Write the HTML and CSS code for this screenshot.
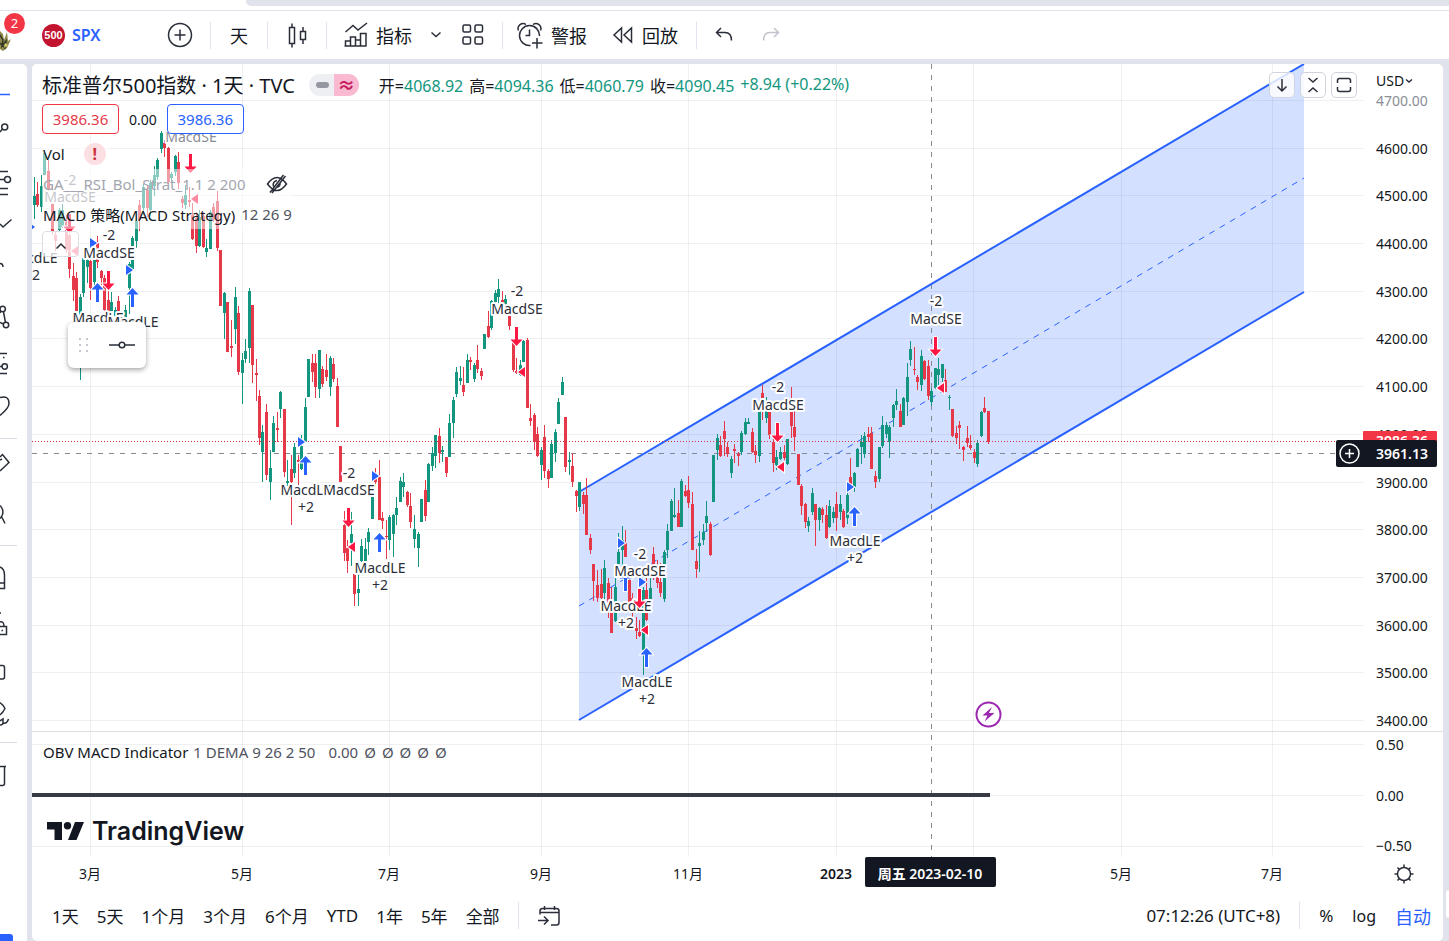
FILE: index.html
```html
<!DOCTYPE html>
<html lang="zh-CN">
  <head>
    <meta charset="UTF-8" />
    <meta name="viewport" content="width=device-width, initial-scale=1.0" />
    <title>SPX 3986.36</title>
    <link rel="stylesheet" href="styles.css" />
  </head>
  <body>
    <div class="tabs"><div class="tabs-rest"></div></div>

    <header class="topbar">
      <div class="profile">
        <svg width="12" height="26" viewBox="0 0 12 26">
          <path d="M0 5 3 8 4 14 7 6 8 15 11 13 7 22 3 25 0 23z" fill="#8f8a4a" />
          <path d="M0 9 3 14 2 20 6 15 5 22 0 17" fill="none" stroke="#2f3328" stroke-width="1.4" />
          <path d="M5 17 8 19 4 22z" fill="#d8cf6a" />
        </svg>
        <span class="badge">2</span>
      </div>
      <button class="symbol"><span class="symbol-logo">500</span>SPX</button>
      <button class="tool w40" aria-label="添加">
        <svg width="26" height="26" viewBox="0 0 26 26"><circle cx="13" cy="13" r="11.5" /><path d="M13 7.500v11M7.500 13h11" /></svg>
      </button>
      <i class="line"></i>
      <button class="tool w36">天</button>
      <i class="line"></i>
      <button class="tool w38" aria-label="K线图">
        <svg width="22" height="28" viewBox="0 0 22 28"><path d="M3.500 6.500h5v16h-5zM6 2.500v4M6 22.500v4M14.500 10.500h5v8h-5zM17 6v4.500M17 18.500V23" /></svg>
      </button>
      <i class="line"></i>
      <button class="tool indicators">
        <svg width="24" height="26" viewBox="0 0 24 26"><path d="M1.500 10 9 3.500l5 4.500 9-7M1.500 24v-5h5v5M6.500 24v-9h5v9M11.500 24v-6h5v6M16.500 24V11.500h5.500V24M.500 24h22" /></svg>
        指标
      </button>
      <button class="tool w28" aria-label="收藏的指标">
        <svg width="12" height="8" viewBox="0 0 12 8"><path d="M1.500 1.500 6 5.500l4.500-4" /></svg>
      </button>
      <button class="tool w38 layouts" aria-label="布局">
        <svg width="22" height="22" viewBox="0 0 22 22"><rect x="1" y="1" width="7.500" height="7" rx="1.500" /><rect x="13" y="1" width="7.500" height="7" rx="1.500" /><rect x="1" y="13" width="7.500" height="7" rx="1.500" /><rect x="13" y="13" width="7.500" height="7" rx="1.500" /></svg>
      </button>
      <i class="line"></i>
      <button class="tool alert">
        <svg width="26" height="28" viewBox="0 0 26 28"><path d="M13.500 24.500A10 10 0 1 1 22.500 15M12.500 8.500v6H8.500M1.500 9.500A5 5 0 0 1 9 3.500M16 3.500a5 5 0 0 1 7.500 6M20 17v10.500M15 22h10.500" /></svg>
        警报
      </button>
      <button class="tool replay">
        <svg width="22" height="20" viewBox="0 0 22 20"><path d="M9.500 3v14L2 10zM19.500 3v14L12 10z" /></svg>
        回放
      </button>
      <i class="line"></i>
      <button class="tool w34" aria-label="撤销">
        <svg width="18" height="16" viewBox="0 0 18 16"><path d="M6 1 1.500 5.500 6 10M1.500 5.500H10q6.500 0 6.500 8" /></svg>
      </button>
      <button class="tool w34 redo" aria-label="重做" disabled>
        <svg width="18" height="16" viewBox="0 0 18 16"><path d="M12 1l4.500 4.500L12 10M16.500 5.500H8q-6.500 0-6.500 8" /></svg>
      </button>
    </header>

    <main class="workspace">
      <nav class="drawbar">
        <button aria-label="光标"><svg viewBox="0 0 27 45"><path class="active" d="M0 26.500h10" /></svg></button>
        <button aria-label="趋势线"><svg viewBox="0 0 27 45"><circle cx="4.700" cy="14" r="3" /><path d="M2.500 16 0 19" /></svg></button>
        <button aria-label="斐波那契"><svg viewBox="0 0 27 45"><path d="M0 13.500h8M0 21.500h4.500M0 30.500h8M0 36.500h8" /><circle cx="7.500" cy="21.500" r="3" /></svg></button>
        <button aria-label="形状"><svg viewBox="0 0 27 45"><path d="M0 21l3 3 8.500-7.500" /></svg></button>
        <button aria-label="文字"><svg viewBox="0 0 27 45"><path d="M0 15.500q3 0 3 3.500" /></svg></button>
        <button aria-label="形态"><svg viewBox="0 0 27 45"><circle cx="2.700" cy="16" r="2.700" /><circle cx="6" cy="32" r="2.700" /><path d="M3.500 19l2 10.500M1 18 0 20M3.500 31 0 29.500" /></svg></button>
        <button aria-label="预测"><svg viewBox="0 0 27 45"><path d="M0 15.500h7M3 19.500h1.500M0 28.500h2M0 35.500h7" /><circle cx="4.700" cy="28.500" r="2.700" /></svg></button>
        <button aria-label="图标"><svg viewBox="0 0 27 45"><path d="M0 14.500q9-2.500 9 6Q9 25 0 32.500" /></svg></button>
        <i></i>
        <button aria-label="测量"><svg viewBox="0 0 27 45"><path d="M0 12l2.500-2.500L9 17.500 0 26M0 15l2-1" /></svg></button>
        <button aria-label="放大"><svg viewBox="0 0 27 45"><path d="M0 15.500q4 4 2.500 9-1 2.500-2.500 4M1.500 26.500 5 33.500" /></svg></button>
        <i></i>
        <button aria-label="磁铁"><svg viewBox="0 0 27 45"><path d="M0 15q4.500 2 4.500 8v13.500H0M0 31h4.500" /></svg></button>
        <button aria-label="保持绘图"><svg viewBox="0 0 27 45"><path d="M0 16h1M0 25q4-1 4 4.500M0 29.500h6.500v8H0M1.500 33.500h1.500" /></svg></button>
        <button aria-label="锁定"><svg viewBox="0 0 27 45"><path d="M0 23.500h2.500q2 0 2 2v9.500q0 2-2 2H0" /></svg></button>
        <button aria-label="隐藏"><svg viewBox="0 0 27 45"><path d="M0 15.500q3 2 5 6-2 4-5 6.500M0 34l3-2v4q4 1 5.500-4M0 38q3 0 3-2" /></svg></button>
        <i></i>
        <button aria-label="删除"><svg viewBox="0 0 27 45"><path d="M0 17.500h6M4.500 17.500v17q0 2-2 2H0" /></svg></button>
        <span class="drawbar-end"></span>
      </nav>

      <section class="chart">
        <div class="plot-row">
          <div class="plot">
            <svg id="plot" class="plot-svg"></svg>

            <div class="legend">
              <div class="legend-head">
                <h1>标准普尔500指数 · 1天 · TVC</h1>
                <span class="status">
                  <svg width="25" height="22" viewBox="0 0 25 22"><rect x="7" y="8" width="13" height="6" rx="3" /></svg>
                  <b>≈</b>
                </span>
                <div class="ohlc">
                  <span>开=<em>4068.92</em></span>
                  <span>高=<em>4094.36</em></span>
                  <span>低=<em>4060.79</em></span>
                  <span>收=<em>4090.45</em></span>
                  <em>+8.94 (+0.22%)</em>
                </div>
              </div>
              <div class="quotes">
                <button class="sell">3986.36</button>
                <span>0.00</span>
                <button class="buy">3986.36</button>
              </div>
              <div class="study">Vol <span class="warn">!</span></div>
              <div class="study hidden">
                GA___RSI_Bol_Strat_1.1 2 200
                <svg width="22" height="20" viewBox="0 0 22 20"><path d="M1.500 10Q11-3 20.500 10 11 23 1.500 10zM7.500 12.500Q6 8 11 6.500M14 8q1 5-4 5.500M17.500 1 4 18.500M19.500 2 6 19" /></svg>
              </div>
              <div class="study">MACD 策略(MACD Strategy) <span>12 26 9</span></div>
              <button class="collapse" aria-label="收起">
                <svg width="12" height="8" viewBox="0 0 12 8"><path d="M1.500 6.500 6 2l4.500 4.500" /></svg>
              </button>
            </div>

            <div class="drawing-menu">
              <svg width="12" height="18" viewBox="0 0 12 18"><path class="grip" d="M2 3h0M9 3h0M2 9h0M9 9h0M2 15h0M9 15h0" /></svg>
              <button aria-label="线条样式"><svg width="28" height="10" viewBox="0 0 28 10"><path d="M1 5h10M17 5h10" /><circle cx="14" cy="5" r="2.800" /></svg></button>
            </div>

            <div class="pane-buttons">
              <button aria-label="移动窗格"><svg width="16" height="16" viewBox="0 0 16 16"><path d="M8 2v12M3.500 9.500 8 14l4.500-4.500" /></svg></button>
              <button aria-label="折叠窗格"><svg width="16" height="16" viewBox="0 0 16 16"><path d="M3.500 1 8 5l4.500-4M3.500 15 8 11l4.500 4" /></svg></button>
              <button aria-label="最大化窗格"><svg width="16" height="16" viewBox="0 0 16 16"><path d="M1.500 6V3.500q0-2 2-2h9q2 0 2 2V6M1.500 10v2.500q0 2 2 2h9q2 0 2-2V10" /></svg></button>
            </div>

            <div class="obv">OBV MACD Indicator <span>1 DEMA 9 26 2 50</span><span class="nums">0.00 <b>Ø</b><b>Ø</b><b>Ø</b><b>Ø</b><b>Ø</b></span></div>

            <a class="brand" href="#">
              <svg width="38" height="20" viewBox="0 0 38 20"><path d="M0 1h15v18H7.500V8.500H0zM28 1h9l-7.500 18H21z" /><circle cx="20.500" cy="4.700" r="3.700" /></svg>
              TradingView
            </a>
          </div>
          <div class="price-axis">
            <svg id="prices" class="price-svg"></svg>
            <label class="currency">
              <select aria-label="货币"><option>USD</option></select>
              <svg width="8" height="6" viewBox="0 0 8 6"><path d="M1 1.500 4 4l3-2.500" /></svg>
            </label>
          </div>
        </div>

        <div class="time-row">
          <svg id="times" class="time-svg"></svg>
          <button class="settings" aria-label="设置">
            <svg width="22" height="22" viewBox="0 0 22 22"><circle cx="11" cy="11" r="6.500" /><path d="M11 1.500v3M11 17.500v3M1.500 11h3M17.500 11h3M4.500 4.500l2 2M15.500 15.500l2 2M17.500 4.500l-2 2M6.500 15.500l-2 2" /></svg>
          </button>
        </div>

        <footer class="ranges">
          <button>1天</button>
          <button>5天</button>
          <button>1个月</button>
          <button>3个月</button>
          <button>6个月</button>
          <button>YTD</button>
          <button>1年</button>
          <button>5年</button>
          <button>全部</button>
          <i class="line"></i>
          <button aria-label="前往">
            <svg width="24" height="22" viewBox="0 0 24 22"><path d="M3 9.500V6q0-2.500 2.500-2.500h14Q22 3.500 22 6v11.500Q22 20 19.500 20H14M3 7.500h19M7.500 1v4M17.500 1v4M1 15.500h9.500M7 11.500l4 4-4 4" /></svg>
          </button>
          <div class="ranges-right">
            <button>07:12:26 (UTC+8)</button>
            <i class="line"></i>
            <button>%</button>
            <button class="log">log</button>
            <button class="auto">自动</button>
          </div>
        </footer>
      </section>
      <aside class="edge"><span></span></aside>
    </main>

    <script src="chart.js"></script>
  </body>
</html>
```
FILE: styles.css
```css
* {
  box-sizing: border-box;
  margin: 0;
  padding: 0;
}
body {
  display: flex;
  flex-direction: column;
  min-height: 100vh;
  overflow: hidden;
  background-color: #e0e3eb;
  color: #131722;
  font-family: "Noto Sans", "Noto Sans CJK SC", sans-serif;
  font-size: 14px;
}
button,
select {
  border: none;
  background: none;
  color: inherit;
  font: inherit;
  cursor: pointer;
}
svg {
  flex: none;
  fill: none;
  stroke: #2a2e39;
  stroke-width: 1.5;
}
em,
i {
  font-style: normal;
}
.line {
  width: 1px;
  height: 27px;
  margin: 0 10px;
  background-color: #e0e3eb;
}

/* 顶部 */
.tabs {
  height: 11px;
  background-color: #fff;
  border-bottom: 1px solid #e0e3eb;
}
.tabs-rest {
  height: 6px;
  margin-left: 246px;
  background-color: #e0e3eb;
  border-bottom-left-radius: 5px;
}
.topbar {
  display: flex;
  align-items: center;
  height: 48px;
  background-color: #fff;
  font-size: 18px;
}
.profile {
  position: relative;
  width: 32px;
  height: 48px;
  padding-top: 15px;
}
.profile svg {
  stroke: none;
}
.badge {
  position: absolute;
  left: 4px;
  top: 2px;
  width: 21px;
  height: 21px;
  border-radius: 50%;
  background-color: #f23645;
  color: #fff;
  font-size: 13px;
  line-height: 21px;
  text-align: center;
}
.symbol {
  display: flex;
  align-items: center;
  gap: 7px;
  width: 128px;
  height: 40px;
  padding-left: 10px;
  color: #2962ff;
  font-size: 16px;
  font-weight: 600;
}
.symbol-logo {
  width: 23px;
  height: 23px;
  border-radius: 50%;
  background-color: #c2132f;
  color: #fff;
  font: bold 11px/23px "Liberation Sans", sans-serif;
  text-align: center;
}
.tool {
  display: flex;
  align-items: center;
  justify-content: center;
  gap: 8px;
  height: 40px;
}
.w28 {
  width: 28px;
}
.w34 {
  width: 34px;
}
.w36 {
  width: 36px;
}
.w38 {
  width: 38px;
}
.w40 {
  width: 40px;
}
.indicators {
  padding: 0 10px 0 7px;
}
.layouts {
  margin-left: 4px;
}
.alert {
  padding: 0 8px 0 4px;
}
.replay {
  margin-left: 9px;
  padding: 0 8px;
}
.redo {
  margin-left: 13px;
}
.redo svg {
  stroke: #c1c4cd;
}

.workspace {
  display: flex;
  flex: 1;
  padding-top: 5px;
}

/* 左侧绘图工具 */
.drawbar {
  display: flex;
  flex-direction: column;
  width: 27px;
  margin-right: 5px;
  padding-top: 4px;
  background-color: #fff;
  border-top-right-radius: 5px;
}
.drawbar button,
.drawbar button svg {
  display: block;
  width: 27px;
  height: 45px;
}
.drawbar i {
  width: 17px;
  height: 1px;
  margin: 10px 0 6px;
  background-color: #d9dce3;
}
.drawbar .active {
  stroke: #2962ff;
}
.drawbar-end {
  width: 13px;
  height: 9px;
  margin-top: auto;
  border-top-right-radius: 3px;
  background-color: #2962ff;
}

/* 图表 */
.chart {
  display: flex;
  flex: 1;
  flex-direction: column;
  min-width: 0;
  margin-bottom: 2px;
  overflow: hidden;
  background-color: #fff;
  border-radius: 5px;
}
.plot-row {
  display: flex;
  height: 793px;
}
.plot {
  position: relative;
  flex: 1;
  min-width: 0;
}
.plot-svg {
  display: block;
  width: 100%;
  height: 100%;
}
.price-axis {
  position: relative;
  width: 79px;
}
.price-svg {
  display: block;
  width: 100%;
  height: 100%;
  overflow: visible;
}
.plot-svg,
.price-svg,
.time-svg {
  stroke: none;
  fill: #131722;
}
.grid {
  stroke: #2a2e39;
  stroke-opacity: 0.07;
  stroke-width: 1;
}
.divider {
  stroke: #dcdee4;
  stroke-width: 1;
}
.channel-fill {
  fill: #2962ff;
  fill-opacity: 0.2;
}
.channel {
  fill: none;
  stroke: #2962ff;
  stroke-width: 2;
}
.channel-mid {
  stroke: #2962ff;
  stroke-width: 1;
  stroke-dasharray: 6 6;
}
.up {
  fill: #129680;
}
.down {
  fill: #e5394a;
}
.price-line {
  stroke: #d0303f;
  stroke-width: 1;
  stroke-dasharray: 1 2;
}
.cross {
  stroke: #868992;
  stroke-width: 1;
  stroke-dasharray: 5 6;
}
.obv-line {
  stroke: #363a45;
  stroke-width: 4;
}
.mark {
  stroke: #fff;
  stroke-width: 2;
  paint-order: stroke;
}
.long {
  fill: #2962ff;
}
.short {
  fill: #ff1744;
}
.mark-text {
  fill: #2a2e39;
  stroke: #fff;
  stroke-width: 4;
  stroke-linejoin: round;
  paint-order: stroke;
  text-anchor: middle;
}
.flash {
  fill: #fff;
  stroke: #9c27b0;
  stroke-width: 2;
}
.flash-bolt {
  fill: #9c27b0;
}
.faded {
  fill: #8a8d96;
}
.tag-dark {
  fill: #131722;
}
.tag-red {
  fill: #f23645;
}
.tag-text {
  fill: #fff;
  font-weight: 600;
}
.tag-plus {
  fill: none;
  stroke: #fff;
  stroke-width: 1.5;
}

/* 图例 */
.legend {
  position: absolute;
  left: 10px;
  top: 4px;
}
.legend-head {
  display: flex;
  align-items: center;
  height: 33px;
}
.legend-head h1 {
  font-size: 20px;
  font-weight: normal;
  white-space: nowrap;
}
.status {
  display: flex;
  height: 22px;
  margin: 0 20px 0 14px;
  overflow: hidden;
  border-radius: 11px;
  background-color: #edeff2;
}
.status svg {
  fill: #9598a1;
  stroke: none;
}
.status b {
  width: 25px;
  background-color: #f9b9d0;
  color: #c2185b;
  font-size: 18px;
  line-height: 22px;
  text-align: center;
}
.ohlc {
  display: flex;
  gap: 6px;
  font-size: 16px;
  white-space: nowrap;
}
.ohlc em {
  color: #129680;
}
.quotes {
  display: flex;
  align-items: center;
  gap: 10px;
  height: 36px;
  margin-bottom: 2px;
}
.quotes button {
  width: 77px;
  height: 30px;
  border: 1px solid #f23645;
  border-radius: 4px;
  background-color: #fff;
  color: #e5394a;
  font-size: 15px;
}
.quotes .buy {
  border-color: #2962ff;
  color: #2962ff;
}
.study {
  display: flex;
  align-items: center;
  gap: 6px;
  width: fit-content;
  height: 30px;
  padding: 0 4px 0 1px;
  background-color: rgba(255, 255, 255, 0.5);
  font-size: 15px;
  white-space: nowrap;
}
.study span,
.obv span {
  color: #50535e;
}
.study .warn {
  width: 22px;
  height: 22px;
  margin-left: 13px;
  border-radius: 50%;
  background-color: #fcdfe2;
  color: #cc2f3c;
  font-size: 16px;
  font-weight: bold;
  line-height: 22px;
  text-align: center;
}
.study.hidden {
  gap: 20px;
  color: #a3a6af;
}
.collapse {
  width: 37px;
  height: 26px;
  margin-top: 2px;
  border: 1px solid #dcdee4;
  border-radius: 4px;
  background-color: rgba(255, 255, 255, 0.75);
}
.drawing-menu {
  position: absolute;
  left: 36px;
  top: 258px;
  display: flex;
  align-items: center;
  gap: 18px;
  width: 78px;
  height: 46px;
  padding-left: 10px;
  border-radius: 6px;
  background-color: #fff;
  box-shadow: 0 2px 5px rgba(0, 0, 0, 0.35);
}
.drawing-menu button {
  display: flex;
}
.grip {
  stroke: #b2b5be;
  stroke-width: 2;
  stroke-linecap: round;
}
.pane-buttons {
  position: absolute;
  top: 8px;
  right: 7px;
  display: flex;
  gap: 5px;
}
.pane-buttons button {
  display: flex;
  align-items: center;
  justify-content: center;
  width: 26px;
  height: 26px;
  border: 1px solid #d1d4dc;
  border-radius: 5px;
  background-color: rgba(255, 255, 255, 0.8);
}
.obv {
  position: absolute;
  left: 11px;
  top: 678px;
  display: flex;
  gap: 5px;
  font-size: 15px;
}
.obv .nums {
  display: flex;
  gap: 6px;
  margin-left: 8px;
}
.obv b {
  font-weight: normal;
}
.brand {
  position: absolute;
  left: 15px;
  top: 752px;
  display: flex;
  align-items: center;
  gap: 7px;
  color: #131722;
  font-family: Inter, sans-serif;
  font-size: 25px;
  font-weight: 600;
  text-decoration: none;
}
.brand svg {
  fill: #131722;
  stroke: none;
}
.currency {
  position: absolute;
  left: 12px;
  top: 7px;
  display: flex;
  align-items: center;
}
.currency select {
  appearance: none;
}

/* 时间轴 */
.time-row {
  display: flex;
  height: 33px;
}
.time-svg {
  flex: 1;
  height: 33px;
  text-anchor: middle;
}
.settings {
  display: flex;
  align-items: center;
  justify-content: center;
  width: 79px;
}
.bold {
  font-weight: 600;
}

/* 底部 */
.ranges {
  display: flex;
  align-items: center;
  height: 51px;
  gap: 18px;
  padding: 0 12px 0 20px;
  font-size: 17px;
  white-space: nowrap;
}
.ranges .line {
  margin: 0;
}
.ranges button svg {
  display: block;
}
.ranges-right {
  display: flex;
  align-items: center;
  gap: 19px;
  margin-left: auto;
}
.log {
  font-size: 16px;
}
.auto {
  color: #2962ff;
  font-size: 18px;
}
.edge {
  display: flex;
  width: 6px;
  padding: 826px 0 0 3px;
}
.edge span {
  width: 3px;
  height: 28px;
  border-radius: 3px 0 0 3px;
  background-color: #fff;
}
```
FILE: chart.js
```js
// 每根K线: 横坐标 最高 实体上 实体下 最低 涨(u)/跌(d)
var bars = `
34 177 196 205 219 u,37 182 194 205 207 d,41 175 186 207 212 u,44 150 153 175 175 u,48 160 171 190 192 d,
52 187 203 232 235 d,55 231 235 241 258 d,59 208 210 230 231 u,62 203 210 227 228 u,66 215 222 250 253 d,
69 232 235 269 278 d,73 263 276 290 301 d,76 272 278 311 318 d,80 294 297 315 380 u,83 255 258 293 297 u,
87 250 258 267 283 u,90 256 261 288 300 d,94 250 257 282 290 u,97 236 243 262 268 d,101 270 271 278 285 d,
104 275 278 310 312 d,108 290 300 316 318 d,111 292 302 311 318 u,115 307 310 316 320 u,118 296 301 311 317 d,
125 305 310 317 319 u,129 262 264 288 314 u,132 236 238 269 270 u,136 217 221 241 248 u,139 200 205 220 231 d,
143 184 187 208 215 u,147 185 190 208 217 d,150 180 183 210 216 u,154 166 175 186 196 u,157 158 160 177 180 u,
161 131 133 149 153 u,164 140 143 148 157 d,168 147 148 182 184 d,171 172 174 178 182 u,175 155 156 172 176 u,
178 152 162 183 189 d,182 196 199 203 208 d,185 185 195 205 209 u,189 187 200 202 207 d,192 203 215 239 240 d,
196 212 218 246 253 d,199 210 217 246 247 u,203 212 216 247 248 d,206 239 248 252 257 u,210 210 212 249 249 u,
213 203 207 219 222 d,217 191 201 248 251 d,220 250 250 306 306 d,224 292 293 313 339 u,227 302 302 352 352 d,
231 320 346 348 357 d,235 287 297 329 344 u,238 306 313 372 375 d,242 353 360 373 404 u,245 339 351 359 363 u,
249 288 291 348 363 u,252 305 305 365 383 d,256 359 373 375 401 d,259 390 396 438 445 d,262 425 432 452 482 u,
266 404 412 475 480 d,270 450 468 482 500 u,273 416 423 452 452 u,277 412 428 430 442 d,280 391 392 409 418 u,
284 409 409 472 477 d,287 460 481 483 486 u,291 455 469 482 525 d,294 443 447 473 478 u,298 455 460 462 488 d,
301 435 446 469 470 u,305 398 407 442 442 u,308 359 359 397 397 u,312 354 363 372 382 d,315 354 363 387 398 d,
319 350 350 389 398 u,322 366 369 384 387 d,326 354 370 377 381 d,330 356 358 387 396 u,333 358 364 379 382 d,
337 378 386 427 427 d,340 446 446 482 482 d,344 511 525 553 561 d,347 540 548 561 573 d,351 512 534 543 566 u,
354 562 574 594 606 d,358 573 589 593 606 u,361 539 546 561 562 u,365 538 549 561 562 u,368 528 532 542 555 u,
372 487 496 519 519 u,375 468 473 482 487 d,379 460 477 520 520 d,382 512 518 521 529 d,386 520 536 537 559 d,
389 515 517 540 550 u,393 514 515 534 557 u,396 497 508 515 525 u,400 477 481 502 502 u,403 473 482 487 497 u,
407 491 492 505 507 d,410 493 506 522 528 d,414 515 529 539 548 u,418 532 534 548 567 u,421 499 499 522 522 u,
425 480 490 516 521 d,428 463 464 502 502 u,432 447 453 466 471 u,435 435 435 456 468 u,439 428 436 453 463 d,
442 446 450 452 462 u,446 457 457 473 477 d,449 414 423 457 457 u,453 397 400 423 438 u,456 367 372 394 397 u,
460 366 378 381 385 u,463 367 385 392 396 d,467 354 360 383 383 u,470 357 360 362 370 d,474 363 365 379 382 u,
477 345 360 369 373 d,481 368 371 376 380 d,484 334 334 349 349 u,488 311 326 337 338 d,491 300 301 328 330 u,
495 290 293 302 306 u,498 279 289 297 303 u,502 291 300 304 305 d,505 295 299 304 305 u,509 314 316 326 330 d,
513 342 343 370 372 d,516 358 371 373 374 d,520 360 365 375 376 u,523 340 341 362 362 u,527 338 340 408 408 d,
530 404 418 421 426 d,534 413 415 442 450 d,537 427 434 456 457 d,541 447 450 465 480 u,544 425 437 471 478 d,
548 469 471 479 488 d,551 440 444 478 478 u,555 429 432 453 462 u,558 398 402 424 424 u,562 377 382 395 395 u,
565 417 417 467 472 d,569 452 460 462 475 u,572 453 466 482 487 d,576 490 491 496 512 d,579 482 482 507 511 u,
583 492 495 504 514 d,586 478 495 535 535 d,590 534 538 550 554 d,593 564 564 581 601 d,597 570 585 598 602 d,
601 569 584 598 613 d,604 560 568 593 600 u,608 578 583 607 618 d,611 587 605 633 633 d,615 575 587 621 622 u,
618 533 552 564 565 u,622 526 540 550 565 u,625 530 543 557 557 d,629 577 580 605 612 d,632 593 598 613 620 d,
636 617 628 631 639 d,639 620 632 636 637 d,643 587 590 650 675 u,646 575 590 620 621 d,650 578 588 604 606 u,
653 547 554 566 580 d,657 560 575 583 588 d,660 563 582 593 597 d,664 550 552 599 602 u,667 524 531 550 558 u,
671 499 501 531 531 u,674 488 515 517 518 u,678 500 513 527 527 d,681 479 481 527 527 u,685 485 491 496 497 d,
688 476 490 503 508 d,692 492 504 550 550 d,696 549 561 569 578 d,699 531 543 546 572 u,703 524 532 540 545 u,
706 501 516 523 532 u,710 522 524 555 556 d,713 455 455 502 502 u,717 434 438 450 460 u,720 436 445 456 457 d,
724 421 431 439 456 d,727 442 447 454 457 d,731 456 459 473 478 u,734 444 449 451 463 d,738 452 454 456 466 d,
741 431 433 452 455 u,745 418 422 434 435 u,748 418 422 424 424 u,752 428 432 452 453 d,755 445 451 455 463 d,
759 402 410 456 462 u,762 385 393 398 420 d,766 397 410 418 423 u,769 410 412 435 439 d,773 437 442 463 472 d,
776 450 457 465 470 u,780 447 452 459 460 u,784 445 452 458 466 d,787 439 439 464 465 u,791 387 408 426 438 d,
794 410 427 437 451 d,798 454 454 485 485 d,801 484 486 506 515 d,805 503 504 522 528 d,808 517 521 526 532 u,
812 488 493 512 515 u,815 504 504 520 546 d,819 507 508 520 531 u,822 507 509 515 523 d,826 505 515 538 539 d,
829 500 506 527 528 u,833 507 512 518 523 u,836 492 504 518 531 d,840 495 504 512 520 u,843 509 511 527 528 d,
847 484 495 518 524 u,850 458 477 484 488 d,854 472 473 487 492 u,857 448 449 467 467 u,861 435 442 447 464 u,
864 432 436 454 458 u,868 427 434 437 442 d,871 427 433 469 469 d,875 471 476 482 488 d,879 447 447 479 482 u,
882 416 425 446 448 u,886 422 425 434 438 u,889 425 427 442 458 u,893 404 405 418 427 u,896 389 401 405 410 u,
900 404 411 427 427 d,903 397 398 425 425 u,907 363 377 402 416 u,910 341 349 360 366 u,914 347 369 370 375 d,
917 375 377 382 390 d,921 350 356 385 391 u,924 360 361 379 380 d,928 360 366 396 400 d,931 388 391 402 406 u,
935 368 368 388 389 u,938 358 369 375 385 u,942 364 364 378 382 u,945 369 380 392 392 d,949 395 397 398 410 u,
952 409 409 436 437 d,956 426 433 438 444 d,959 421 425 428 449 d,963 446 447 450 461 d,967 426 438 443 447 d,
970 435 445 448 450 d,974 449 452 458 463 d,977 440 443 464 467 u,981 411 412 436 437 u,984 397 408 412 413 d,
988 411 411 442 444 d`;

// 做空: x, 数量y, 名称y, 箭头y, 是否变灰
var shorts = [
  [69, 180, 197, 214, 1], [190, 0, 137, 154, 1], [108, 235, 253, 271], [348, 473, 490, 508],
  [516, 291, 309, 327], [639, 554, 571, 589], [777, 387, 405, 423], [935, 301, 319, 337]
];
// 做多: x, 箭头y, 文字y
var longs = [
  [31, 0, 258], [97, 283, 318], [132, 288, 322], [305, 456, 490],
  [379, 533, 568], [625, 572, 606], [646, 648, 682], [854, 507, 541]
];
var shortFills = [[71, 251], [191, 199], [348, 547], [518, 372], [641, 630], [777, 467], [937, 388]];
var longFills = [[28, 227], [90, 243], [126, 270], [298, 442], [372, 476], [618, 543], [639, 582], [847, 487]];

var months = [[90, "3月"], [242, "5月"], [389, "7月"], [541, "9月"], [688, "11月"], [836, "2023"], [973, ""], [1121, "5月"], [1272, "7月"]];

function line(x1, y1, x2, y2, cls) {
  return `<line x1="${x1}" y1="${y1}" x2="${x2}" y2="${y2}" class="${cls}"/>`;
}
function text(x, y, str, cls) {
  return `<text x="${x}" y="${y}" class="${cls || ""}">${str}</text>`;
}
function priceY(p) {
  return Math.round(101 + ((4700 - p) * 620) / 1300);
}

var out = "";
var i;

// 通道
out += '<path class="channel-fill" d="M579 492 1304 64V292L579 720z"/>';

// 网格
months.forEach(function (m) {
  out += line(m[0] + 0.5, 64, m[0] + 0.5, 857, "grid");
});
for (i = 4700; i >= 3400; i -= 100) {
  out += line(32, priceY(i) - 0.5, 1364, priceY(i) - 0.5, "grid");
}
[744.5, 795.5, 846.5].forEach(function (y) {
  out += line(32, y, 1364, y, "grid");
});
out += line(32, 731.5, 3000, 731.5, "divider");

out += line(931.5, 64, 931.5, 857, "cross") + line(32, 453.5, 3000, 453.5, "cross");
out += '<path class="channel" d="M579 492 1304 64M579 720 1304 292"/>';
out += line(579, 606, 1304, 178, "channel-mid");

// K线
bars.split(",").forEach(function (row) {
  var b = row.trim().split(" ");
  var cls = b[5] == "u" ? "up" : "down";
  out += `<path class="${cls}" d="M${b[0]} ${b[1]}h1V${b[4]}h-1zM${b[0] - 1} ${b[2]}h3V${b[3]}h-3z"/>`;
});
out += line(32, 441.5, 3000, 441.5, "price-line");
out += line(32, 795, 990, 795, "obv-line");

// 策略信号, 先多后空
longs.forEach(function (m) {
  out += text(m[0] + 1, m[2] + 5, "MacdLE", "mark-text");
  // 被绘图菜单挡住的不画数量
  if (m[0] != 97 && m[0] != 132) out += text(m[0] + 1, m[2] + 22, "+2", "mark-text");
});
longs.forEach(function (m) {
  if (m[1]) out += `<path class="mark long" d="M${m[0] + 0.5} ${m[1]}l6 6.500h-4.500v12.500h-3v-12.500h-4.500z"/>`;
});
longFills.forEach(function (m) {
  out += `<path class="mark long" d="M${m[0] + 7} ${m[1]}l-7-5v10z"/>`;
});
shorts.forEach(function (m) {
  var cls = m[4] ? "mark-text faded" : "mark-text";
  if (m[1]) out += text(m[0] + 1, m[1] + 5, "-2", cls);
  out += text(m[0] + 1, m[2] + 5, "MacdSE", cls);
});
shorts.forEach(function (m) {
  out += `<path class="mark short" d="M${m[0] + 0.5} ${m[3] + 19}l6-6.500h-4.500v-12.500h-3v12.500h-4.500z"/>`;
});
shortFills.forEach(function (m) {
  out += `<path class="mark short" d="M${m[0]} ${m[1]}l7-5v10z"/>`;
});

out += '<circle class="flash" cx="988.500" cy="714.500" r="12"/>';
out += '<path class="flash-bolt" d="M992 707l-9.500 8.500h5l-3 6 10-8.500h-5.500z"/>';

document.getElementById("plot").innerHTML = '<g transform="translate(-32 -64)">' + out + "</g>";

// 价格轴
out = "";
for (i = 4700; i >= 3400; i -= 100) {
  out += text(12, priceY(i) - 59, i + ".00", i == 4700 ? "faded" : "");
}
out += text(12, 686, "0.50") + text(12, 737, "0.00") + text(12, 787, "−0.50");
out += line(0, 667.5, 79, 667.5, "divider");
out += '<rect class="tag-red" x="-1" y="367" width="74" height="22" rx="1"/>' + text(12, 382, "3986.36", "tag-text");
out += '<rect class="tag-dark" x="-28" y="376" width="101" height="27" rx="2"/>' + text(12, 395, "3961.13", "tag-text");
out += '<circle class="tag-plus" cx="-14.500" cy="389.500" r="9.500"/><path class="tag-plus" d="M-14.500 385v9M-19 389.500h9"/>';
document.getElementById("prices").innerHTML = out;

// 时间轴
out = "";
months.forEach(function (m) {
  out += text(m[0] - 32, 22, m[1], m[1] == "2023" ? "bold" : "");
});
out += '<rect class="tag-dark" x="833" y="0" width="131" height="30" rx="2"/>' + text(898, 22, "周五 2023-02-10", "tag-text");
document.getElementById("times").innerHTML = out;
```
